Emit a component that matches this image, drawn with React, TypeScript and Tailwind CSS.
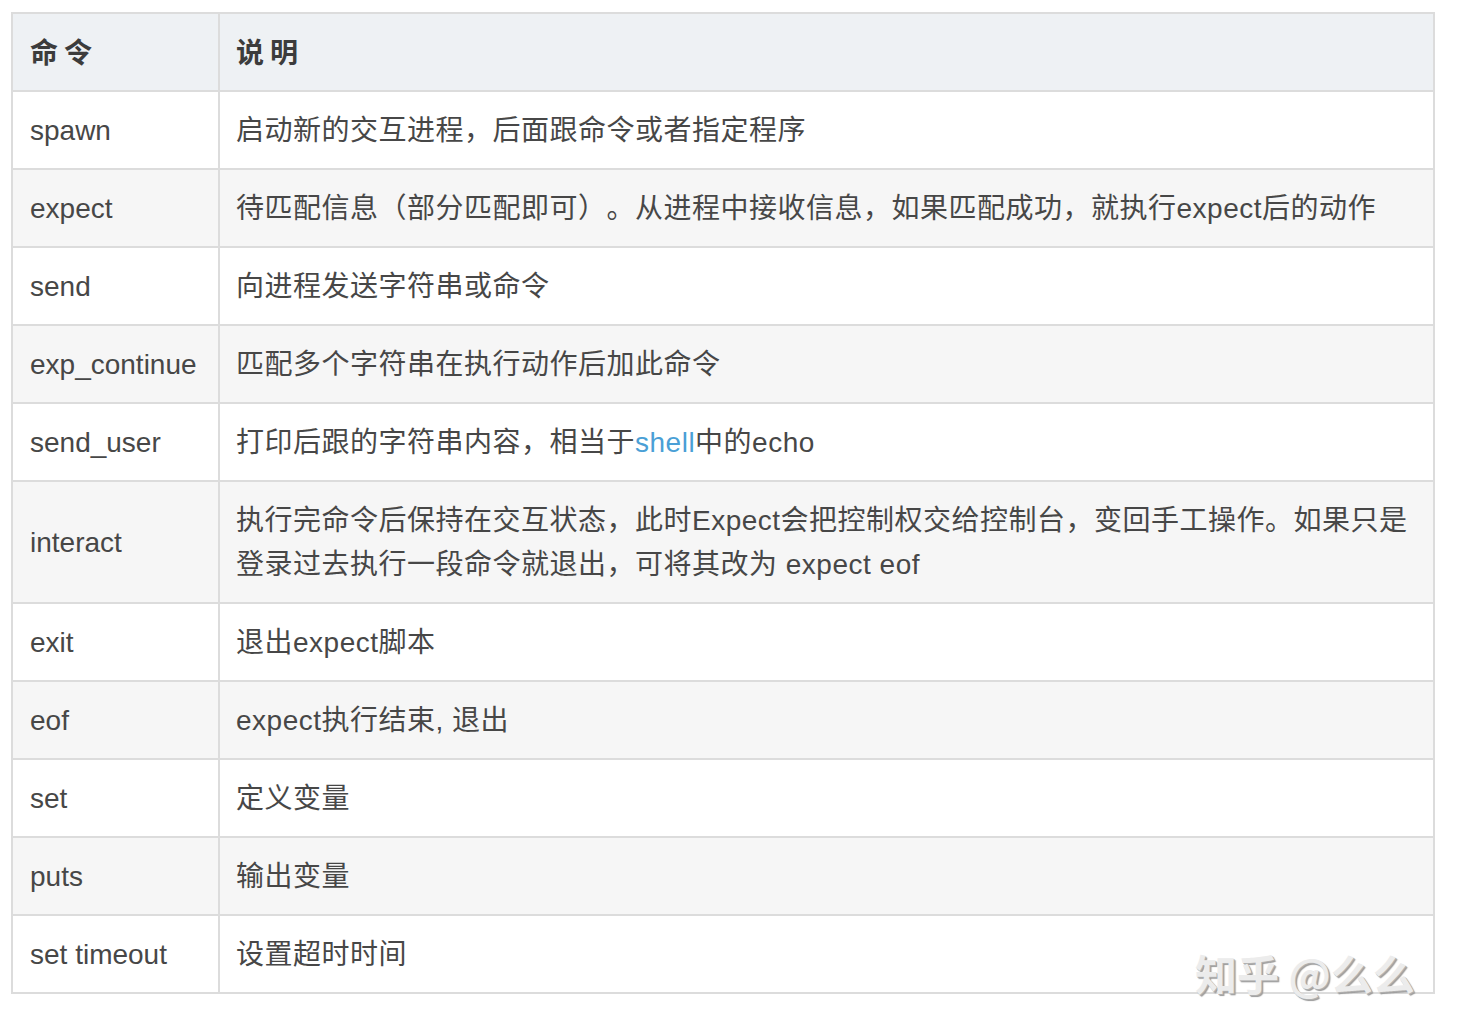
import React from "react";

const rows: { cmd: string; desc: React.ReactNode }[] = [
  { cmd: "spawn", desc: "启动新的交互进程，后面跟命令或者指定程序" },
  { cmd: "expect", desc: "待匹配信息（部分匹配即可）。从进程中接收信息，如果匹配成功，就执行expect后的动作" },
  { cmd: "send", desc: "向进程发送字符串或命令" },
  { cmd: "exp_continue", desc: "匹配多个字符串在执行动作后加此命令" },
  {
    cmd: "send_user",
    desc: (
      <>
        打印后跟的字符串内容，相当于<span className="text-[#4a9fd6]">shell</span>中的echo
      </>
    ),
  },
  {
    cmd: "interact",
    desc: (
      <>
        执行完命令后保持在交互状态，此时Expect会把控制权交给控制台，变回手工操作。如果只是
        <br />
        登录过去执行一段命令就退出，可将其改为 expect eof
      </>
    ),
  },
  { cmd: "exit", desc: "退出expect脚本" },
  { cmd: "eof", desc: "expect执行结束, 退出" },
  { cmd: "set", desc: "定义变量" },
  { cmd: "puts", desc: "输出变量" },
  { cmd: "set timeout", desc: "设置超时时间" },
];

export default function App() {
  return (
    <div
      className="relative w-[1464px] h-[1034px] bg-white overflow-hidden pl-[11px] pt-[12px] [text-spacing-trim:space-all]"
      style={{ fontFamily: '"Liberation Sans", "Noto Sans CJK SC", sans-serif' }}
    >
      <table className="border-collapse w-[1424px] text-[28px] leading-[44px] text-[#474747]">
        <thead>
          <tr className="bg-[#eef1f4]">
            <th className="w-[207px] border-2 border-[#dcdcdc] text-left font-bold text-[#3c3c3c] pl-[17px] pt-[18px] pb-[14px] tracking-[6px]">
              命令
            </th>
            <th className="border-2 border-[#dcdcdc] text-left font-bold text-[#3c3c3c] pl-[16px] pt-[18px] pb-[14px] tracking-[6px]">
              说明
            </th>
          </tr>
        </thead>
        <tbody>
          {rows.map((r, i) => (
            <tr key={r.cmd} className={i % 2 === 0 ? "bg-white" : "bg-[#f6f6f6]"}>
              <td className="border-2 border-[#dcdcdc] pl-[17px] pt-[17px] pb-[15px] align-middle whitespace-nowrap">
                {r.cmd}
              </td>
              <td className="border-2 border-[#dcdcdc] pl-[16px] pr-[10px] pt-[17px] pb-[15px] align-middle whitespace-nowrap tracking-[0.5px]">
                {r.desc}
              </td>
            </tr>
          ))}
        </tbody>
      </table>
      <div
        className="absolute left-[1195px] top-[941px] text-[42px] font-bold text-[#ececec] whitespace-nowrap [text-shadow:1px_1px_0_#b0b0b0,2px_2px_1px_#999999]"
        style={{ fontFamily: '"Noto Sans CJK SC", sans-serif' }}
      >
        知乎 @么么
      </div>
    </div>
  );
}
